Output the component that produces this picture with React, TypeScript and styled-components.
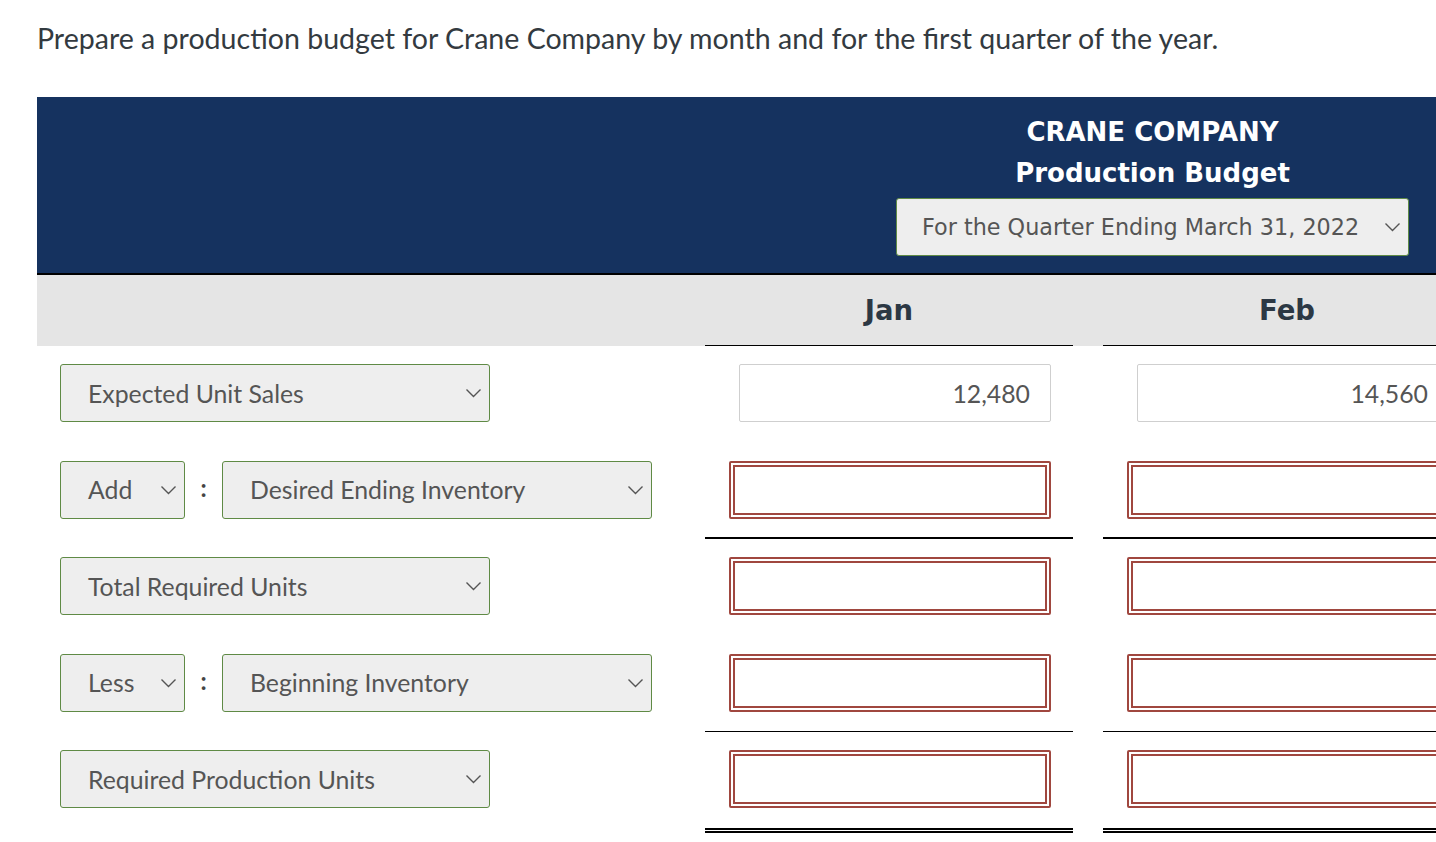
import React from "react";
import styled, { createGlobalStyle } from "styled-components";

const GlobalStyle = createGlobalStyle`
  html, body {
    margin: 0;
    padding: 0;
    overflow: hidden;
    background: #fff;
  }
  body {
    font-family: Lato, "Open Sans", sans-serif;
  }
`;

const Page = styled.div`
  padding: 20px 0 0 37px;
  width: 2400px;
`;

const Prompt = styled.p`
  margin: 0 0 41px;
  font-size: 28.55px;
  line-height: 36px;
  color: #333a40;
`;

const Table = styled.div`
  display: grid;
  grid-template-columns: 653px repeat(4, 398px);
  width: max-content;
`;

const Banner = styled.div`
  grid-column: 1 / -1;
  background: #15325f;
  border-bottom: 2px solid #000;
  padding: 15px 0 17px 859px;
  height: 144px;
`;

const TitleBlock = styled.div`
  width: 513px;
  display: flex;
  flex-direction: column;
  align-items: center;
`;

const TitleLine = styled.div`
  font-family: "DejaVu Sans", Verdana, sans-serif;
  font-weight: 700;
  font-size: 26px;
  line-height: 41px;
  color: #fff;
`;

const HeaderBand = styled.div`
  grid-column: 1 / -1;
  display: grid;
  grid-template-columns: subgrid;
  background: #e5e5e5;
  height: 71px;
`;

const MonthLabel = styled.div`
  margin: 0 15px;
  border-bottom: 1px solid #000;
  display: flex;
  align-items: center;
  justify-content: center;
  font-family: "DejaVu Sans", Verdana, sans-serif;
  font-weight: 700;
  font-size: 27.5px;
  color: #2c3844;
`;

const LabelCell = styled.div`
  box-sizing: border-box;
  height: 96.5px;
  padding: 18px 0 0 23px;
  display: flex;
  align-items: flex-start;
`;

type Line = "none" | "single" | "thin" | "double";

const NumCell = styled.div<{ $line: Line }>`
  box-sizing: border-box;
  height: ${(p) => (p.$line === "double" ? 101 : 96.5)}px;
  margin: 0 15px;
  padding-top: 18px;
  border-bottom: ${(p) =>
    p.$line === "single"
      ? "2px solid #000"
      : p.$line === "thin"
      ? "1px solid #000"
      : p.$line === "double"
      ? "5px double #000"
      : "none"};
`;

const SelectBox = styled.div<{ $w: number }>`
  box-sizing: border-box;
  width: ${(p) => p.$w}px;
  height: 58px;
  background: #eeeeee;
  border: 1px solid #5f8a45;
  border-radius: 3px;
  display: flex;
  align-items: center;
  justify-content: space-between;
  padding: 0 7px 0 27px;
  font-size: 24.8px;
  color: #555;
`;

const DateSelect = styled(SelectBox)`
  margin-top: 4px;
  padding-left: 25px;
  font-family: "DejaVu Sans", Verdana, sans-serif;
  font-size: 22.3px;
  color: #555;
`;

const Colon = styled.span`
  width: 37px;
  text-align: center;
  font-size: 24px;
  font-weight: 700;
  color: #444;
  line-height: 58px;
  margin-top: -2px;
`;

const GivenInput = styled.div`
  box-sizing: border-box;
  margin-left: 34px;
  width: 312px;
  height: 58px;
  background: #fff;
  border: 1px solid #cfcfcf;
  border-radius: 2px;
  display: flex;
  align-items: center;
  justify-content: flex-end;
  padding-right: 20px;
  font-size: 24.8px;
  color: #555;
`;

const AnswerInput = styled.div`
  box-sizing: border-box;
  margin-left: 24px;
  width: 322px;
  height: 58px;
  background: #fff;
  border: 2px solid #a0473f;
  border-radius: 2px;
  box-shadow: inset 0 0 0 2px #fff, inset 0 0 0 4px #a0473f;
`;

const Chevron = () => (
  <svg width="17" height="10" viewBox="0 0 17 10" fill="none">
    <path d="M1.5 1.5 L8.5 8.5 L15.5 1.5" stroke="#555" strokeWidth="1.4" />
  </svg>
);

const Select = ({ w, label }: { w: number; label: string }) => (
  <SelectBox $w={w}>
    <span>{label}</span>
    <Chevron />
  </SelectBox>
);

interface Row {
  op?: string;
  label: string;
  line: Line;
  given?: string[];
}

const rows: Row[] = [
  { label: "Expected Unit Sales", line: "none", given: ["12,480", "14,560", "", ""] },
  { op: "Add", label: "Desired Ending Inventory", line: "single" },
  { label: "Total Required Units", line: "none" },
  { op: "Less", label: "Beginning Inventory", line: "thin" },
  { label: "Required Production Units", line: "double" },
];

const months = ["Jan", "Feb", "Mar", "Quarter"];

export default function App() {
  return (
    <>
      <GlobalStyle />
      <Page>
        <Prompt>
          Prepare a production budget for Crane Company by month and for the first quarter of the year.
        </Prompt>
        <Table>
          <Banner>
            <TitleBlock>
              <TitleLine>CRANE COMPANY</TitleLine>
              <TitleLine>Production Budget</TitleLine>
              <DateSelect $w={513}>
                <span>For the Quarter Ending March 31, 2022</span>
                <Chevron />
              </DateSelect>
            </TitleBlock>
          </Banner>
          <HeaderBand>
            <div />
            {months.map((m) => (
              <MonthLabel key={m}>{m}</MonthLabel>
            ))}
          </HeaderBand>
          {rows.map((r, i) => (
            <React.Fragment key={i}>
              <LabelCell>
                {r.op ? (
                  <>
                    <Select w={125} label={r.op} />
                    <Colon>:</Colon>
                    <Select w={430} label={r.label} />
                  </>
                ) : (
                  <Select w={430} label={r.label} />
                )}
              </LabelCell>
              {months.map((m, j) => (
                <NumCell key={m} $line={r.line}>
                  {r.given ? (
                    <GivenInput>{r.given[j]}</GivenInput>
                  ) : (
                    <AnswerInput />
                  )}
                </NumCell>
              ))}
            </React.Fragment>
          ))}
        </Table>
      </Page>
    </>
  );
}
